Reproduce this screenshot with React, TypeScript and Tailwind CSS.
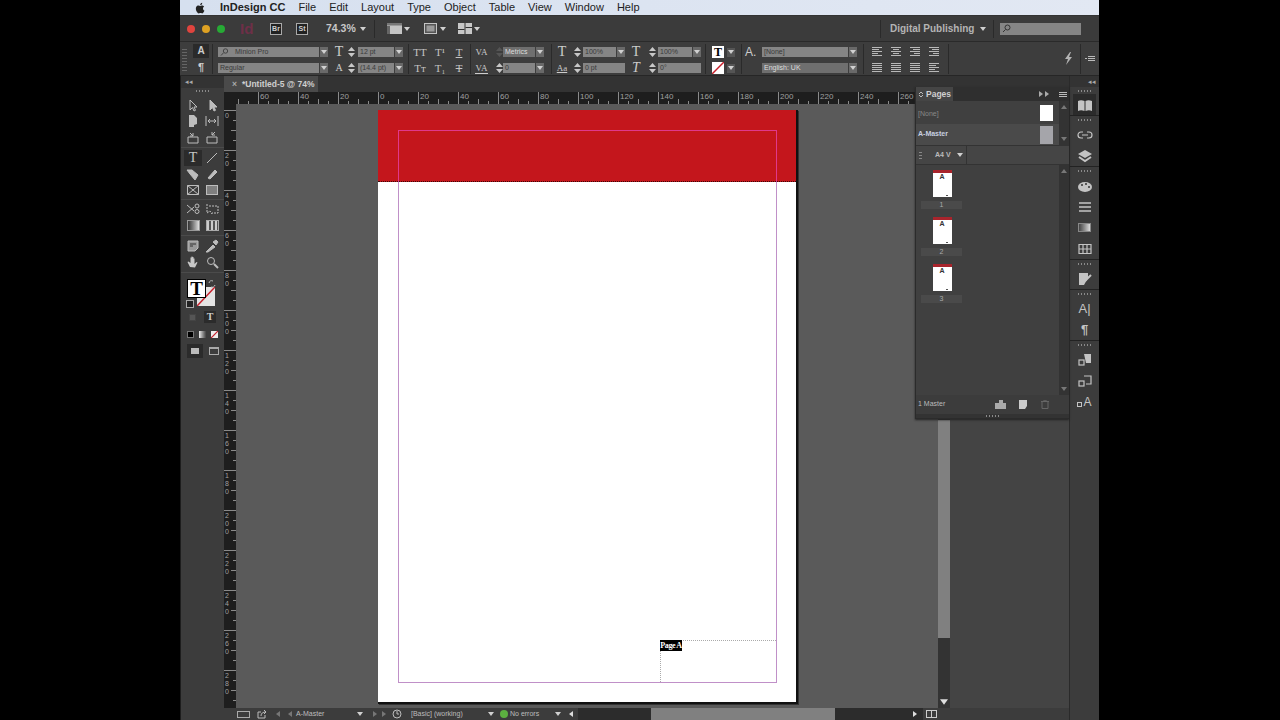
import React from 'react';

const SANS = 'font-["Liberation_Sans",Arial,sans-serif]';
const SERIF = 'font-["Liberation_Serif",serif]';

const Tri = ({ dir = 'down', color = '#d0d0d0', size = 3 }: { dir?: 'down' | 'up' | 'left' | 'right'; color?: string; size?: number }) => {
  const pts = { down: '0,1 6,1 3,5', up: '0,5 6,5 3,1', left: '5,0 5,6 1,3', right: '1,0 1,6 5,3' }[dir];
  return (
    <svg width={size * 2} height={size * 2} viewBox="0 0 6 6" className="shrink-0">
      <polygon points={pts} fill={color} />
    </svg>
  );
};

const Field = ({ w, text, dark, search }: { w: number; text?: string; dark?: boolean; search?: boolean }) => (
  <div
    style={{ width: w }}
    className={`h-[10px] pl-[2px] flex items-center gap-[6px] overflow-hidden whitespace-nowrap text-[7px] leading-[10px] ${dark ? 'bg-[#6f6f6f] text-[#ddd]' : 'bg-[#858585] text-[#3a3a3a]'}`}
  >
    {search && (
      <svg width="9" height="8" viewBox="0 0 9 8" fill="none" stroke="#444" className="shrink-0">
        <circle cx="5.500" cy="3" r="2.200" />
        <path d="M3.500 4.800 1 7.500" />
      </svg>
    )}
    {text}
  </div>
);

const Drop = () => (
  <div className="w-[8px] h-[10px] bg-[#696969] flex items-center justify-center ml-px">
    <Tri />
  </div>
);

const Stepper = ({ dim }: { dim?: boolean }) => (
  <div className="w-[8px] h-[10px] flex items-center justify-center">
    <svg width="7" height="10" viewBox="0 0 7 10">
      <polygon points="3.5,0 7,4 0,4" fill={dim ? '#555' : '#c8c8c8'} />
      <polygon points="0,6 7,6 3.5,10" fill={dim ? '#555' : '#c8c8c8'} />
    </svg>
  </div>
);

const Sep = ({ className = '' }: { className?: string }) => <div className={`w-px h-[30px] bg-[#2a2a2a] shrink-0 ${className}`} />;

const Lines = ({ kind }: { kind: number }) => {
  const sets = [
    [[0, 10], [0, 7], [0, 10], [0, 6], [0, 10]],
    [[0, 10], [2, 6], [0, 10], [2, 6], [0, 10]],
    [[0, 10], [3, 7], [0, 10], [4, 6], [0, 10]],
    [[0, 10], [0, 10], [0, 10], [0, 10], [0, 10]],
  ][kind];
  return (
    <svg width="11" height="10" viewBox="0 0 11 10">
      {sets.map(([x, w], i) => (
        <rect key={i} x={x} y={i * 2} width={w} height="1" fill="#b8b8b8" />
      ))}
    </svg>
  );
};

const TextBtn = ({ children, w = 20 }: { children: React.ReactNode; w?: number }) => (
  <span style={{ width: w }} className={`text-center text-[11px] leading-[10px] text-[#c4c4c4] ${SERIF}`}>{children}</span>
);

const Grip = () => <div className="w-[14px] h-[2px] mx-auto bg-[repeating-linear-gradient(90deg,#8a8a8a_0_1px,transparent_1px_3px)]" />;

const Top = () => (
  <div className="h-[26px] shrink-0 bg-[#3b3b3b] border-b border-[#2a2a2a] flex items-center rounded-t-[4px] text-[#cfcfcf]">
    <div className="flex items-center gap-[7px] ml-[7px] w-[50px]">
      <span className="size-[8px] rounded-full bg-[#e0443e]" />
      <span className="size-[8px] rounded-full bg-[#dea123]" />
      <span className="size-[8px] rounded-full bg-[#27aa35]" />
    </div>
    <span className={`ml-[3px] w-[25px] text-[15px] leading-[15px] font-bold text-[#6e2f48] ${SANS}`}>Id</span>
    <div className="ml-[5px] size-[12px] border border-[#aaa] bg-[#222] text-[7px] leading-[10px] text-center font-bold">Br</div>
    <div className="ml-[14px] size-[12px] border border-[#aaa] bg-[#222] text-[7px] leading-[10px] text-center font-bold">St</div>
    <span className="ml-[18px] w-[30px] text-[10.5px] font-bold text-[#c8c8c8]">74.3%</span>
    <span className="ml-[4px]"><Tri /></span>
    <div className="ml-[8px] w-px h-[18px] bg-[#2a2a2a]" />
    <div className="ml-[12px] flex items-center gap-[2px]">
      <svg width="15" height="13" viewBox="0 0 15 13">
        <rect x="0" y="1" width="15" height="11" fill="#c4c4c4" />
        <rect x="0" y="1" width="15" height="2.5" fill="#777" />
        <rect x="0" y="4" width="3" height="8" fill="#666" />
      </svg>
      <Tri />
    </div>
    <div className="ml-[13px] flex items-center gap-[2px]">
      <svg width="15" height="13" viewBox="0 0 15 13">
        <rect x="1.5" y="1.5" width="12" height="10" fill="#555" stroke="#c4c4c4" />
        <rect x="3.5" y="3.5" width="8" height="6" fill="#9a9a9a" />
      </svg>
      <Tri />
    </div>
    <div className="ml-[12px] flex items-center gap-[2px]">
      <svg width="14" height="13" viewBox="0 0 14 13">
        <rect x="0" y="1" width="14" height="11" fill="#c8c8c8" />
        <rect x="6.5" y="1" width="1" height="11" fill="#333" />
        <rect x="7.5" y="5" width="6.5" height="1" fill="#333" />
        <rect x="0" y="7" width="6.5" height="1" fill="#333" />
      </svg>
      <Tri />
    </div>
    <div className="flex-1" />
    <div className="w-px h-[18px] bg-[#2a2a2a]" />
    <span className={`ml-[9px] w-[81px] whitespace-nowrap text-[10px] font-bold text-[#b4b4b4] ${SANS}`}>Digital Publishing</span>
    <span className="ml-[9px]"><Tri /></span>
    <div className="ml-[7px] w-px h-[18px] bg-[#2a2a2a]" />
    <div className="ml-[6px] mr-[18px] w-[81px] h-[12px] bg-[#858585] flex items-center pl-[2px]">
      <svg width="9" height="9" viewBox="0 0 9 9" fill="none" stroke="#333">
        <circle cx="5.5" cy="3.5" r="2.5" />
        <path d="M3.500 5.500 1 8" />
      </svg>
    </div>
  </div>
);

const Col = ({ children, className = '' }: { children: React.ReactNode; className?: string }) => (
  <div className={`flex flex-col gap-[6px] pt-[3px] ${className}`}>{children}</div>
);
const Row = ({ children }: { children: React.ReactNode }) => <div className="flex items-center h-[10px]">{children}</div>;

const Control = () => (
  <div className={`h-[34px] shrink-0 bg-[#3d3d3d] border-b border-[#262626] flex items-center text-[#ccc] ${SANS}`}>
    <div className="w-[5px] h-[24px] ml-[2px] bg-[repeating-linear-gradient(0deg,#666_0_1px,transparent_1px_3px)]" />
    <div className="ml-[3px] w-[22px] flex flex-col items-center gap-[2px]">
      <div className="w-[16px] h-[14px] bg-[#2a2a2a] text-center text-[10px] leading-[14px] font-bold">A</div>
      <div className="text-[11px] leading-[14px] font-bold">¶</div>
    </div>
    <Sep />
    <Col className="ml-[5px] w-[110px]">
      <Row><Field w={101} text="Minion Pro" search /><Drop /></Row>
      <Row><Field w={101} text="Regular" /><Drop /></Row>
    </Col>
    <Col className="ml-[5px]">
      <Row>
        <span className={`w-[12px] text-[14px] leading-[10px] text-center ${SERIF}`}>T</span>
        <span className="w-[2px]" />
        <Stepper />
        <span className="w-[3px]" />
        <Field w={36} text="12 pt" />
        <Drop />
      </Row>
      <Row>
        <span className={`w-[12px] text-[10px] leading-[10px] text-center ${SERIF}`}>A</span>
        <span className="w-[2px]" />
        <Stepper />
        <span className="w-[3px]" />
        <Field w={36} text="(14.4 pt)" />
        <Drop />
      </Row>
    </Col>
    <Sep className="ml-[5px]" />
    <Col className="ml-px">
      <Row>
        <TextBtn>TT</TextBtn>
        <TextBtn>T¹</TextBtn>
        <TextBtn w={18}><span className="underline">T</span></TextBtn>
      </Row>
      <Row>
        <TextBtn>Tт</TextBtn>
        <TextBtn>T₁</TextBtn>
        <TextBtn w={18}><span className="line-through">T</span></TextBtn>
      </Row>
    </Col>
    <Sep className="ml-[2px]" />
    <Col className="ml-[4px]">
      <Row>
        <span className={`w-[13px] text-[9px] leading-[10px] text-center whitespace-nowrap ${SERIF}`}>VA</span>
        <span className="w-[7px]" />
        <Stepper dim />
        <Field w={32} text="Metrics" dark />
        <Drop />
      </Row>
      <Row>
        <span className={`w-[13px] text-[9px] leading-[10px] text-center whitespace-nowrap border-b border-[#ccc] ${SERIF}`}>VA</span>
        <span className="w-[7px]" />
        <Stepper />
        <Field w={32} text="0" />
        <Drop />
      </Row>
    </Col>
    <Sep className="ml-[7px]" />
    <Col className="ml-[4px]">
      <Row>
        <span className={`w-[12px] text-[14px] leading-[10px] text-center ${SERIF}`}>T</span>
        <span className="w-[5px]" />
        <Stepper />
        <span className="w-[2px]" />
        <Field w={33} text="100%" />
        <Drop />
      </Row>
      <Row>
        <span className={`w-[12px] text-[9px] leading-[10px] text-center underline ${SERIF}`}>Aa</span>
        <span className="w-[5px]" />
        <Stepper />
        <span className="w-[2px]" />
        <Field w={42} text="0 pt" />
      </Row>
    </Col>
    <Col className="ml-[5px]">
      <Row>
        <span className={`w-[12px] text-[14px] leading-[10px] text-center ${SERIF}`}>T</span>
        <span className="w-[6px]" />
        <Stepper />
        <span className="w-[2px]" />
        <Field w={34} text="100%" />
        <Drop />
      </Row>
      <Row>
        <span className={`w-[12px] text-[14px] leading-[10px] text-center italic ${SERIF}`}>T</span>
        <span className="w-[6px]" />
        <Stepper />
        <span className="w-[2px]" />
        <Field w={43} text="0°" />
      </Row>
    </Col>
    <Sep className="ml-[4px]" />
    <div className="ml-[6px] pt-[3px] flex flex-col gap-[4px]">
      <div className="flex items-center gap-[3px]">
        <div className={`size-[12px] bg-white text-black text-center text-[12px] leading-[12px] font-bold ${SERIF}`}>T</div>
        <div className="w-[8px] h-[9px] bg-[#555] flex items-center justify-center"><Tri /></div>
      </div>
      <div className="flex items-center gap-[3px]">
        <svg width="12" height="12" viewBox="0 0 12 12">
          <rect width="12" height="12" fill="#fff" />
          <path d="M0 12 12 0" stroke="#c8202c" strokeWidth="1.5" />
        </svg>
        <div className="w-[8px] h-[9px] bg-[#555] flex items-center justify-center"><Tri /></div>
      </div>
    </div>
    <Sep className="ml-[6px]" />
    <Col className="ml-[3px]">
      <Row>
        <span className="w-[17px] text-[12px] leading-[10px]">A.</span>
        <Field w={86} text="[None]" />
        <Drop />
      </Row>
      <Row>
        <span className="w-[17px]" />
        <Field w={86} text="English: UK" dark />
        <Drop />
      </Row>
    </Col>
    <Sep className="ml-[6px]" />
    <Col className="ml-[8px]">
      <div className="flex gap-[8px]">
        <Lines kind={0} />
        <Lines kind={1} />
        <Lines kind={2} />
        <Lines kind={2} />
      </div>
      <div className="flex gap-[8px]">
        <Lines kind={3} />
        <Lines kind={3} />
        <Lines kind={3} />
        <Lines kind={0} />
      </div>
    </Col>
    <Sep className="ml-[8px]" />
    <div className="flex-1" />
    <svg width="9" height="13" viewBox="0 0 9 13">
      <path d="M6 0 1 7h3l-2 6 6-8H5l2-5z" fill="#b4b4b4" />
    </svg>
    <Sep className="ml-[7px]" />
    <div className="ml-[4px] mr-[4px] flex items-center gap-px">
      <span className="w-[2px] h-px bg-[#bbb]" />
      <div className="flex flex-col gap-px">
        <span className="w-[7px] h-px bg-[#bbb]" />
        <span className="w-[7px] h-px bg-[#bbb]" />
        <span className="w-[7px] h-px bg-[#bbb]" />
      </div>
    </div>
  </div>
);

const I = ({ children }: { children: React.ReactNode }) => (
  <div className="w-[18px] h-[16px] flex items-center justify-center">
    <svg width="14" height="14" viewBox="0 0 14 14" fill="none" stroke="#bdbdbd" strokeWidth="1">
      {children}
    </svg>
  </div>
);

const ToolRow = ({ children }: { children: React.ReactNode }) => <div className="flex justify-center gap-px">{children}</div>;

const Tools = () => (
  <div className={`w-[44px] shrink-0 bg-[#3c3c3c] border-l border-[#1d1d1d] flex flex-col ${SANS}`}>
    <div className="h-[12px] bg-[#333] flex items-center pl-[4px]">
      <span className="text-[7px] text-[#aaa]">◂◂</span>
    </div>
    <div className="h-[5px] flex items-center"><Grip /></div>
    <div className="h-[4px]" />
    <ToolRow>
      <I><path d="M4 2v10l2.500-2.500L8 13l1.500-.7L8 9h3z" /></I>
      <I><path d="M5 2v10l2.500-2.500L9 13l1.500-.7L9 9h3z" fill="#bdbdbd" /></I>
    </ToolRow>
    <ToolRow>
      <I><path d="M3 1h5l3 3v6l-3 1v2H3z" fill="#bdbdbd" stroke="none" /></I>
      <I><path d="M1 2v10M13 2v10M3 7h8M3 7l2-2M3 7l2 2M11 7 9 5M11 7l-2 2" /></I>
    </ToolRow>
    <ToolRow>
      <I><path d="M2 7h10v6H2zM4 3l3 3M7 3v3H4" /></I>
      <I><path d="M2 7h10v6H2zM10 2 7 5M7 2v3h3" /></I>
    </ToolRow>
    <div className="h-px bg-[#4b4b4b] my-[2px]" />
    <ToolRow>
      <div className={`w-[18px] h-[16px] bg-[#2b2b2b] text-center text-[14px] leading-[16px] text-[#c4c4c4] ${SERIF}`}>T</div>
      <I><path d="M2 12 12 2" /></I>
    </ToolRow>
    <ToolRow>
      <I><path d="M1 3h5l6 5-3 5-5-6z" fill="#bdbdbd" /></I>
      <I><path d="M3 11 10 3l2 2-7 7z" fill="#bdbdbd" /></I>
    </ToolRow>
    <ToolRow>
      <I><path d="M1.500 2.500h11v9h-11zM1.500 2.500l11 9M12.500 2.500l-11 9" /></I>
      <I><rect x="1.500" y="2.500" width="11" height="9" fill="#808080" /></I>
    </ToolRow>
    <div className="h-px bg-[#4b4b4b] my-px" />
    <ToolRow>
      <I><path d="M1 3l7 6M1 11l7-6M9 9.500a2 2 0 1 0 4 0 2 2 0 1 0-4 0M9 4a2 2 0 1 0 4 0 2 2 0 1 0-4 0" /></I>
      <I><path d="M2 2v9l3-2 2 3M4 4h9v7H7" strokeDasharray="2 1" /></I>
    </ToolRow>
    <ToolRow>
      <div className="w-[18px] h-[16px] flex items-center justify-center">
        <div className="w-[13px] h-[11px] bg-gradient-to-r from-[#333] to-[#e0e0e0] border border-[#999]" />
      </div>
      <div className="w-[18px] h-[16px] flex items-center justify-center">
        <div className="w-[13px] h-[11px] bg-[#666] border border-[#aaa] bg-[repeating-linear-gradient(90deg,#ccc_0_2px,#555_2px_4px)]" />
      </div>
    </ToolRow>
    <div className="h-px bg-[#4b4b4b] my-[2px]" />
    <ToolRow>
      <I><path d="M2 2h10v7l-3 3H2z" fill="#999" /><path d="M4 5h6M4 7h3" stroke="#333" /></I>
      <I><path d="M1 13l7-7 2 2-7 5zM8 3l3 3 2-3-2-2z" fill="#bdbdbd" /></I>
    </ToolRow>
    <ToolRow>
      <I><path d="M4 12 1.500 7l1-.5L4.500 8V2.500h1V7V1.500h1V7V2h1v5V3.500h1V9l2-2 1 .5L9 12.500z" fill="#c8c8c8" stroke="none" /></I>
      <I><circle cx="6" cy="6" r="3.500" /><path d="M9 9l4 4" strokeWidth="2" /></I>
    </ToolRow>
    <div className="h-px bg-[#4b4b4b] my-[2px]" />
    <div className="relative h-[31px] mt-[4px] shrink-0">
      <div className={`absolute left-[6px] top-0 z-10 w-[19px] h-[19px] bg-white border border-black text-black text-center text-[19px] leading-[18px] font-bold ${SERIF}`}>T</div>
      <svg className="absolute left-[16px] top-[8px]" width="18" height="19" viewBox="0 0 18 19">
        <rect width="18" height="19" fill="#e4e4e4" />
        <path d="M0 19 18 0" stroke="#c8202c" strokeWidth="1.5" />
      </svg>
      <svg className="absolute left-[27px] top-[1px]" width="8" height="8" viewBox="0 0 8 8" fill="none" stroke="#bbb">
        <path d="M1 3a3 3 0 0 1 4-2M7 5a3 3 0 0 1-4 2" />
      </svg>
      <div className="absolute left-[5px] top-[21px] z-20 size-[8px] bg-[#222] border border-[#aaa]" />
    </div>
    <div className="flex justify-center items-center gap-[8px] h-[14px] shrink-0">
      <div className="size-[7px] bg-[#555] border border-[#444]" />
      <div className={`w-[12px] h-[12px] bg-[#2b2b2b] text-center text-[10px] leading-[12px] text-[#ccc] font-bold ${SERIF}`}>T</div>
    </div>
    <div className="flex justify-center items-center gap-[5px] h-[16px] mt-[2px] shrink-0">
      <div className="size-[7px] bg-black border border-[#777]" />
      <div className="size-[7px] bg-gradient-to-r from-[#eee] to-[#444]" />
      <svg width="7" height="7" viewBox="0 0 7 7">
        <rect width="7" height="7" fill="#eee" />
        <path d="M0 7 7 0" stroke="#c8202c" strokeWidth="1.2" />
      </svg>
    </div>
    <div className="flex justify-center items-center gap-[6px] h-[18px] shrink-0">
      <div className="w-[16px] h-[14px] bg-[#2b2b2b] flex items-center justify-center">
        <div className="w-[8px] h-[6px] bg-[#bbb]" />
      </div>
      <div className="w-[10px] h-[8px] border border-[#aaa] border-t-2" />
    </div>
    <div className="flex-1" />
  </div>
);

const HRuler = () => {
  const ticks = [];
  for (let x = 154 - 360; x < 691; x += 10) {
    if (x < 12) continue;
    const n = Math.round((x - 154) / 10);
    const major = n % 4 === 0;
    ticks.push(<line key={x} x1={x + 0.5} x2={x + 0.5} y1={major ? 0 : n % 2 === 0 ? 7 : 9} y2={12} stroke="#8a8a8a" />);
    if (major && x < 675) {
      ticks.push(
        <text key={`t${x}`} x={x + 2} y={7} fontSize="8" fill="#a0a0a0" fontFamily="Liberation Sans">
          {Math.abs(n * 5)}
        </text>
      );
    }
  }
  return (
    <div className="h-[12px] shrink-0 bg-[#1e1e1e] overflow-hidden">
      <svg width="845" height="12" viewBox="0 0 845 12" className="block">
        {ticks}
      </svg>
    </div>
  );
};

const VRuler = () => {
  const ticks = [];
  for (let y = 6; y < 604; y += 10) {
    const n = Math.round((y - 6) / 10);
    const major = n % 4 === 0;
    ticks.push(<line key={y} x1={major ? 0 : n % 2 === 0 ? 7 : 9} x2={12} y1={y + 0.5} y2={y + 0.5} stroke="#8a8a8a" />);
    if (major) {
      String(n * 5).split('').forEach((d, i) =>
        ticks.push(
          <text key={`t${y}${i}`} x={1} y={y + 8 + i * 8} fontSize="7" fill="#a0a0a0" fontFamily="Liberation Sans">
            {d}
          </text>
        )
      );
    }
  }
  return (
    <div className="w-[12px] shrink-0 bg-[#1e1e1e] overflow-hidden">
      <svg width="12" height="604" viewBox="0 0 12 604" className="block">
        {ticks}
      </svg>
    </div>
  );
};

const Canvas = () => (
  <div className="relative flex-1 bg-[#5a5a5a] overflow-hidden">
    <div className="absolute left-[142px] top-[6px] w-[420px] h-[594px] bg-white border-r-2 border-b-2 border-[#111] shadow-[1px_1px_0_#333]">
      <div className="h-[72px] bg-[#c4161c] border-b border-dotted border-[#3a0a0a]" />
      <div className="absolute left-[20px] top-[20px] w-[379px] h-[553px] border border-[#c090c8]">
        <div className="absolute -left-px -top-px w-[379px] h-[52px] border-x border-t border-[#e0388c]" />
        <div className="absolute right-0 bottom-0 w-[116px] h-[42px] border-l border-t border-dotted border-[#aaa]" />
        <div className={`absolute left-[261px] top-[509px] w-[22px] h-[11px] bg-black text-white text-[8px] leading-[11px] tracking-[-0.4px] text-center whitespace-nowrap font-bold ${SERIF}`}>Page A</div>
      </div>
    </div>
  </div>
);

const VScroll = () => (
  <div className="w-[12px] shrink-0 bg-[#333] flex flex-col">
    <div className="h-[316px]" />
    <div className="h-[218px] bg-[#808080]" />
    <div className="flex-1" />
    <div className="h-[12px] flex items-center justify-center"><Tri color="#ddd" size={4} /></div>
  </div>
);

const Status = () => (
  <div className={`h-[12px] shrink-0 bg-[#3c3c3c] flex items-center text-[7px] text-[#bdbdbd] ${SANS}`}>
    <div className="w-[13px]" />
    <div className="w-[13px] h-[7px] border border-[#aaa]" />
    <svg className="ml-[7px]" width="10" height="9" viewBox="0 0 10 9" fill="none" stroke="#bbb">
      <path d="M8 5v3H1V2h3M4 6c0-3 2-4 5-4M7 0l2 2-2 2" />
    </svg>
    <span className="ml-[8px] w-[8px]"><Tri dir="left" color="#777" /></span>
    <span className="ml-[4px] w-[8px]"><Tri dir="left" color="#777" /></span>
    <span className="ml-px w-[60px]">A-Master</span>
    <span className="ml-px"><Tri /></span>
    <span className="ml-[9px] w-[9px]"><Tri dir="right" color="#777" /></span>
    <span className="w-[9px]"><Tri dir="right" color="#777" /></span>
    <svg className="ml-[2px]" width="10" height="10" viewBox="0 0 10 10" fill="none" stroke="#bbb">
      <circle cx="5" cy="5" r="4" />
      <path d="M5 2v3h2" />
    </svg>
    <span className="ml-[9px] w-[77px] whitespace-nowrap">[Basic] (working)</span>
    <Tri />
    <span className="ml-[6px] size-[8px] rounded-full bg-[#5cb040]" />
    <span className="ml-[2px] w-[45px]">No errors</span>
    <Tri />
    <span className="ml-[7px] w-[10px]"><Tri dir="left" color="#ddd" /></span>
    <div className="flex-1 h-full bg-[#2c2c2c] flex items-center">
      <div className="w-[73px]" />
      <div className="w-[184px] h-full bg-[#808080]" />
      <div className="flex-1" />
      <span className="w-[11px]"><Tri dir="right" color="#ddd" /></span>
    </div>
    <div className="ml-[3px] mr-[11px] w-[11px] h-[8px] border border-[#ccc] bg-[linear-gradient(90deg,transparent_4px,#ccc_4px,#ccc_5px,transparent_5px)]" />
    <div className="w-[121px]" />
  </div>
);

const Thumb = ({ n }: { n: number }) => (
  <div className="flex flex-col items-center w-[41px] ml-[5px] mb-[8px]">
    <div className="relative ml-px w-[19px] h-[27px] bg-white border-t-[3px] border-[#a8242c] text-center text-[7px] leading-[8px] text-[#333] font-bold">
      A
      <span className="absolute right-[4px] bottom-[1px] w-[2px] h-px bg-[#555]" />
    </div>
    <div className="mt-[4px] w-[41px] h-[8px] bg-[#4a4a4a] text-center text-[7px] leading-[8px] text-[#aaa]">{n}</div>
  </div>
);

const Panel = () => (
  <div className={`absolute left-[691px] top-[11px] w-[154px] h-[332px] bg-[#404040] border-l border-b border-[#2b2b2b] flex flex-col text-[#bbb] ${SANS} shadow-[0_1px_2px_#222]`}>
    <div className="h-[14px] shrink-0 bg-[#2f2f2f] flex items-center">
      <div className="w-[37px] h-full bg-[#454545] flex items-center pl-[3px] gap-[3px]">
        <svg width="4" height="7" viewBox="0 0 4 7" fill="none" stroke="#bbb"><path d="M0 3 2 1l2 2M0 4l2 2 2-2" /></svg>
        <span className="text-[8.5px] leading-[14px] font-bold text-[#d0d0d0]">Pages</span>
      </div>
      <div className="flex-1" />
      <span className="flex mr-[9px]">
        <Tri dir="right" color="#aaa" />
        <Tri dir="right" color="#aaa" />
      </span>
      <div className="w-[8px] flex flex-col gap-px mr-[2px]">
        <span className="h-px bg-[#bbb]" /><span className="h-px bg-[#bbb]" /><span className="h-px bg-[#bbb]" />
      </div>
    </div>
    <div className="h-[45px] shrink-0 flex border-b border-[#333]">
      <div className="flex-1 flex flex-col">
        <div className="h-[24px] flex items-center justify-between pl-[2px] pr-[6px] text-[7px] text-[#888]">
          <span className="pt-[3px]">[None]</span>
          <div className="w-[13px] h-[16px] bg-white" />
        </div>
        <div className="h-[21px] flex items-center justify-between pl-[2px] pr-[6px] text-[7px] font-bold text-[#c8d0e0] bg-[#4a4a4a]">
          <span>A-Master</span>
          <div className="w-[13px] h-[18px] bg-[#a5a5aa]" />
        </div>
      </div>
      <div className="w-[10px] bg-[#333] flex flex-col items-center justify-between py-[3px]">
        <Tri dir="up" color="#777" /><Tri color="#777" />
      </div>
    </div>
    <div className="h-[19px] shrink-0 border-b border-[#333] flex items-center bg-[#454545]">
      <div className="w-[3px] ml-[3px] h-[7px] bg-[repeating-linear-gradient(0deg,#888_0_1px,transparent_1px_3px)]" />
      <div className="w-[13px]" />
      <span className="w-[22px] text-[7px] font-bold whitespace-nowrap">A4 V</span>
      <Tri />
      <div className="ml-[3px] w-px h-full bg-[#333]" />
    </div>
    <div className="flex-1 flex">
      <div className="flex-1 pt-[5px]">
        <Thumb n={1} /><Thumb n={2} /><Thumb n={3} />
      </div>
      <div className="w-[10px] bg-[#333] flex flex-col items-center justify-between py-[3px]">
        <Tri dir="up" color="#777" /><Tri color="#777" />
      </div>
    </div>
    <div className="h-[19px] shrink-0 bg-[#3c3c3c] flex items-center text-[7px]">
      <span className="ml-[2px]">1 Master</span>
      <div className="flex-1" />
      <svg width="11" height="9" viewBox="0 0 11 9"><path d="M0 3h4V0h4v3h3v6H0z" fill="#aaa" /></svg>
      <svg className="ml-[13px]" width="8" height="9" viewBox="0 0 8 9"><path d="M0 0h8v6L6 9H0z" fill="#ccc" /></svg>
      <svg className="ml-[14px] mr-[20px]" width="8" height="9" viewBox="0 0 8 9" fill="none" stroke="#666"><path d="M0 1.500h8M1 2v6.500h6V2M3 1V0h2v1" /></svg>
    </div>
    <div className="h-[4px] shrink-0 flex items-center bg-[#333]"><Grip /></div>
  </div>
);

const DockIcon = ({ children, active }: { children: React.ReactNode; active?: boolean }) => (
  <div className={`h-[21px] flex items-center justify-center mx-[3px] ${active ? 'bg-[#2b2b2b]' : ''}`}>
    <svg width="16" height="14" viewBox="0 0 16 14" fill="none" stroke="#c4c4c4" strokeWidth="1.2">
      {children}
    </svg>
  </div>
);

const DockSep = () => <div className="h-[9px] shrink-0 border-t border-[#222] flex items-center"><Grip /></div>;

const Dock = () => (
  <div className={`w-[30px] shrink-0 bg-[#3c3c3c] border-l border-[#2a2a2a] flex flex-col ${SANS}`}>
    <div className="h-[11px] shrink-0 bg-[#333] text-right pr-[3px] text-[7px] leading-[11px] text-[#aaa]">◂◂</div>
    <div className="h-[7px] shrink-0 flex items-center"><Grip /></div>
    <DockIcon active><path d="M1 3c2-1 4-1 6.500 0v10C5 12 3 12 1 13zM8.500 3c2-1 4-1 6.500 0v10c-2-1-4-1-6.500 0z" fill="#c4c4c4" stroke="none" /></DockIcon>
    <DockSep />
    <DockIcon><path d="M6 4H4a3 3 0 0 0 0 6h2M10 4h2a3 3 0 0 1 0 6h-2M5 7h6" /></DockIcon>
    <DockIcon><path d="M8 1 15 5 8 9 1 5z" fill="#c4c4c4" stroke="none" /><path d="M2 8l6 4 6-4" strokeWidth="2" /></DockIcon>
    <DockSep />
    <DockIcon><ellipse cx="8" cy="8" rx="7" ry="5" fill="#c4c4c4" stroke="none" /><circle cx="5" cy="6" r="1" fill="#333" stroke="none" /><circle cx="9" cy="5" r="1" fill="#333" stroke="none" /><circle cx="12" cy="8" r="1" fill="#333" stroke="none" /></DockIcon>
    <DockIcon><path d="M2 3h12M2 7h12M2 11h12" strokeWidth="1.500" /></DockIcon>
    <div className="h-[21px] flex items-center justify-center">
      <div className="w-[13px] h-[9px] bg-gradient-to-r from-[#444] to-[#ddd] border border-[#888]" />
    </div>
    <DockIcon><path d="M2 2.500h12v9H2zM2 7h12M6 2.500v9M10 2.500v9" /></DockIcon>
    <DockSep />
    <DockIcon><path d="M2 1h9v5l-4 7H2z" fill="#c4c4c4" stroke="none" /><path d="M8 9l6-6" strokeWidth="2" /></DockIcon>
    <DockSep />
    <div className="h-[21px] flex items-center justify-center text-[13px] text-[#c4c4c4]">A|</div>
    <div className="h-[21px] flex items-center justify-center text-[13px] font-bold text-[#c4c4c4]">¶</div>
    <DockSep />
    <DockIcon><rect x="2" y="7" width="5" height="5" /><path d="M7 1h7v9H9z" fill="#c4c4c4" stroke="none" /></DockIcon>
    <DockIcon><rect x="2" y="7" width="5" height="5" /><path d="M7 2h7v8H9" /></DockIcon>
    <div className="h-[21px] flex items-center justify-center gap-px text-[12px] text-[#c4c4c4]">
      <span className="w-[5px] h-[5px] border border-[#c4c4c4] mt-[5px]" />A
    </div>
    <div className="flex-1" />
  </div>
);

export default function App() {
  return (
    <div className="w-[1280px] h-[720px] bg-black overflow-hidden">
      <div className={`ml-[180px] w-[919px] h-[720px] flex flex-col bg-[#3c3c3c] ${SANS}`}>
        <div className="h-[16px] shrink-0 bg-gradient-to-r from-[#d6e0ef] to-[#e2e8f3] flex items-center text-[11px] text-[#222] whitespace-nowrap border-b border-[#333]">
          <svg className="ml-[15px]" width="10" height="12" viewBox="0 0 10 12">
            <path d="M8 6.400c0-1.300 1-1.900 1.100-2-.6-.9-1.500-1-1.900-1-.8-.1-1.600.5-2 .5s-1-.5-1.700-.5C2.600 3.400 1.800 3.900 1.300 4.700c-1 1.600-.2 4 .7 5.300.5.700 1 1.400 1.700 1.400s.9-.4 1.700-.4 1 .4 1.700.4 1.200-.7 1.600-1.300c.5-.8.700-1.500.7-1.500S8 7.900 8 6.400zM6.700 2.500c.4-.4.600-1 .5-1.700-.5 0-1.200.4-1.500.8-.3.400-.6 1-.5 1.600.6 0 1.200-.3 1.500-.7z" fill="#222" />
          </svg>
          <span className="ml-[15px] font-bold">InDesign CC</span>
          <div className="ml-[13px] flex gap-[13px]">
            {['File', 'Edit', 'Layout', 'Type', 'Object', 'Table', 'View', 'Window', 'Help'].map((m) => (
              <span key={m}>{m}</span>
            ))}
          </div>
        </div>
        <Top />
        <Control />
        <div className="flex-1 flex min-h-0">
          <Tools />
          <div className="relative flex-1 flex flex-col min-w-0">
            <div className="h-[16px] shrink-0 bg-[#333] flex">
              <div className="w-[94px] h-full bg-[#4a4a4a] flex items-center pl-[8px] gap-[5px] text-[8.5px] font-bold text-[#cfcfcf] whitespace-nowrap">
                <span className="text-[#aaa]">×</span>
                <span>*Untitled-5 @ 74%</span>
              </div>
            </div>
            <HRuler />
            <div className="flex-1 flex min-h-0">
              <VRuler />
              <Canvas />
              <VScroll />
              <div className="w-[119px] shrink-0 bg-[#444]" />
            </div>
            <Status />
            <Panel />
          </div>
          <Dock />
        </div>
      </div>
    </div>
  );
}
